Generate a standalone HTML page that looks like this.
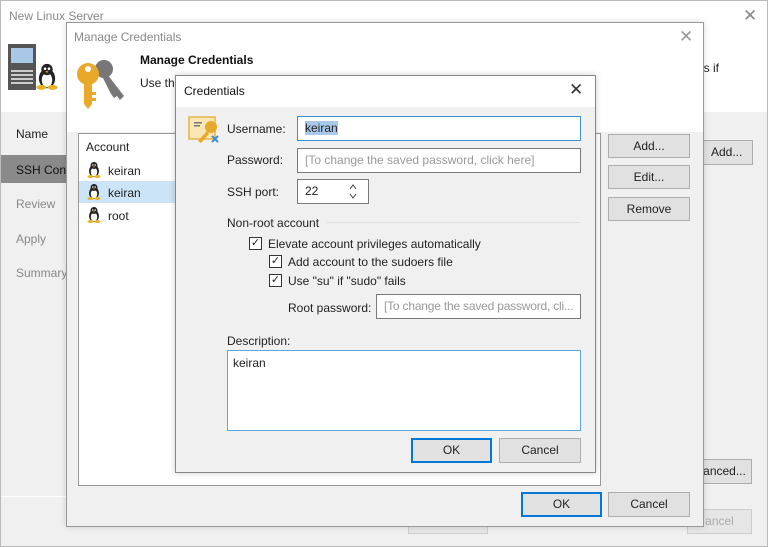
<!DOCTYPE html>
<html><head><style>
*{box-sizing:border-box;margin:0;padding:0}
body{width:768px;height:547px;overflow:hidden;font-family:"Liberation Sans",sans-serif;font-size:12px;color:#222;background:#f0f0f0;position:relative}
.a{position:absolute;white-space:nowrap}
.btn{position:absolute;background:#e1e1e1;border:1px solid #adadad;text-align:center;line-height:22px;font-size:12px;color:#222}
.btnp{border:2px solid #0078d7;line-height:20px}
.inp{position:absolute;background:#fff;border:1px solid #7a7a7a;padding-left:7px;line-height:22px;color:#999;white-space:nowrap;overflow:hidden}
.cb{position:absolute;width:13px;height:13px;border:1px solid #333;background:#fff;font-size:11px;line-height:11px;text-align:center;color:#222}
.x{position:absolute;font-size:17px;color:#333;line-height:17px}
</style></head><body>
<svg width="0" height="0" style="position:absolute"><defs>
<g id="pg"><ellipse cx="8" cy="10" rx="5" ry="6" fill="#222"/><ellipse cx="8" cy="11" rx="3.2" ry="4.5" fill="#fff"/><circle cx="8" cy="4.5" r="3.5" fill="#222"/><circle cx="6.8" cy="4" r=".8" fill="#fff"/><circle cx="9.2" cy="4" r=".8" fill="#fff"/><path d="M7 5.5h2l-1 1.2z" fill="#e8a92a"/><ellipse cx="4.5" cy="15.5" rx="3" ry="1.5" fill="#e8b320"/><ellipse cx="11.5" cy="15.5" rx="3" ry="1.5" fill="#e8b320"/></g>
</defs></svg>
<div class="a" style="left:0;top:0;width:768px;height:547px;border:1px solid #bbb;background:#f0f0f0"></div>
<div class="a" style="left:1px;top:1px;width:766px;height:111px;background:#fff"></div>
<div class="a" style="left:9px;top:9px;color:#888;font-size:12px">New Linux Server</div>
<div class="x" style="left:743px;top:7px;color:#888">✕</div>
<div class="a" style="left:697px;top:61px">gs if</div>
<div class="a" style="left:8px;top:44px;width:28px;height:46px;background:#555"></div>
<div class="a" style="left:11px;top:48px;width:22px;height:15px;background:#a9c8e8"></div>
<div class="a" style="left:11px;top:70px;width:22px;height:16px;background:repeating-linear-gradient(#ccc 0 2px,#555 2px 4px)"></div>
<svg class="a" style="left:34px;top:62px" width="26" height="28" viewBox="0 0 16 17"><use href="#pg"/></svg>
<div class="a" style="left:16px;top:127px">Name</div>
<div class="a" style="left:1px;top:155px;width:65px;height:28px;background:#8a8a8a"></div>
<div class="a" style="left:16px;top:163px;color:#111">SSH Conn</div>
<div class="a" style="left:16px;top:197px;color:#888">Review</div>
<div class="a" style="left:16px;top:232px;color:#888">Apply</div>
<div class="a" style="left:16px;top:266px;color:#888">Summary</div>
<div class="a" style="left:1px;top:496px;width:65px;height:1px;background:#fff"></div>
<div class="btn" style="left:697px;top:140px;width:56px;height:25px">&nbsp;Add...</div>
<div class="btn" style="left:697px;top:459px;width:55px;height:25px">anced...</div>
<div class="btn" style="left:687px;top:509px;width:65px;height:25px;color:#aaa;background:#e6e6e6;border-color:#ccc">ancel</div>
<div class="btn" style="left:408px;top:509px;width:80px;height:25px;background:#e6e6e6;border-color:#ccc"></div>
<div class="a" style="left:66px;top:22px;width:638px;height:505px;border:1px solid #999;background:#f0f0f0;box-shadow:0 0 6px rgba(0,0,0,.15)"></div>
<div class="a" style="left:67px;top:23px;width:636px;height:109px;background:#fff"></div>
<div class="a" style="left:74px;top:30px;color:#888">Manage Credentials</div>
<div class="x" style="left:679px;top:28px;color:#999">✕</div>
<svg class="a" style="left:74px;top:56px" width="56" height="56" viewBox="0 0 56 56">
<circle cx="30" cy="13" r="9" fill="#777"/><path d="M33 18 L50 40 L46 44 L43 40 L40 42 L37 38 L29 22Z" fill="#777"/>
<circle cx="14" cy="18" r="11" fill="#e8a92a"/><circle cx="14" cy="13" r="3" fill="#fff"/>
<path d="M10 27 H18 V48 L14 53 L10 48Z" fill="#e8a92a"/><rect x="18" y="36" width="4" height="3" fill="#e8a92a"/><rect x="18" y="42" width="4" height="3" fill="#e8a92a"/>
</svg>
<div class="a" style="left:140px;top:53px;font-weight:bold;color:#111">Manage Credentials</div>
<div class="a" style="left:140px;top:76px">Use th</div>
<div class="a" style="left:78px;top:133px;width:523px;height:353px;background:#fff;border:1px solid #999"></div>
<div class="a" style="left:86px;top:140px">Account</div>
<div class="a" style="left:79px;top:181px;width:97px;height:22px;background:#cce4f7"></div>
<svg class="a" style="left:86px;top:161px" width="16" height="17"><use href="#pg"/></svg><div class="a" style="left:108px;top:164px">keiran</div>
<svg class="a" style="left:86px;top:183px" width="16" height="17"><use href="#pg"/></svg><div class="a" style="left:108px;top:186px">keiran</div>
<svg class="a" style="left:86px;top:206px" width="16" height="17"><use href="#pg"/></svg><div class="a" style="left:108px;top:209px">root</div>
<div class="btn" style="left:608px;top:134px;width:82px;height:24px">Add...</div>
<div class="btn" style="left:608px;top:165px;width:82px;height:24px">Edit...</div>
<div class="btn" style="left:608px;top:197px;width:82px;height:24px">Remove</div>
<div class="btn btnp" style="left:521px;top:492px;width:81px;height:25px">OK</div>
<div class="btn" style="left:608px;top:492px;width:82px;height:25px">Cancel</div>
<div class="a" style="left:175px;top:75px;width:421px;height:398px;border:1px solid #888;background:#f0f0f0;box-shadow:0 0 6px rgba(0,0,0,.2)"></div>
<div class="a" style="left:176px;top:76px;width:419px;height:31px;background:#fff"></div>
<div class="a" style="left:184px;top:84px;color:#111">Credentials</div>
<div class="x" style="left:569px;top:81px">✕</div>
<svg class="a" style="left:188px;top:115px" width="34" height="30" viewBox="0 0 34 30">
<rect x="1" y="2" width="26" height="22" fill="#fbe7b5" stroke="#e8b24a" stroke-width="1.5"/>
<rect x="6" y="7" width="8" height="1.5" fill="#777"/><rect x="6" y="10" width="6" height="1.5" fill="#777"/>
<circle cx="23" cy="12" r="6" fill="#e8a92a"/><path d="M19 16 L10 26 L13 28 L21 19Z" fill="#e8a92a"/>
<path d="M24 21 L30 27 M30 21 L24 27" stroke="#3a8fd0" stroke-width="2"/>
</svg>
<div class="a" style="left:227px;top:122px">Username:</div>
<div class="inp" style="left:297px;top:116px;width:284px;height:25px;border-color:#3c8fd6;color:#222"><span style="background:#a9c9ea">keiran</span></div>
<div class="a" style="left:227px;top:153px">Password:</div>
<div class="inp" style="left:297px;top:148px;width:284px;height:25px">[To change the saved password, click here]</div>
<div class="a" style="left:227px;top:185px">SSH port:</div>
<div class="inp" style="left:297px;top:179px;width:72px;height:25px;color:#222;overflow:visible">22
<svg class="a" style="left:50px;top:3px" width="10" height="17" viewBox="0 0 10 17"><path d="M2 6 L5 2 L8 6 M2 11 L5 15 L8 11" fill="none" stroke="#444" stroke-width="1"/></svg></div>
<div class="a" style="left:227px;top:216px">Non-root account</div>
<div class="a" style="left:327px;top:222px;width:253px;height:1px;background:#ddd"></div>
<div class="cb" style="left:249px;top:237px">✓</div><div class="a" style="left:268px;top:237px">Elevate account privileges automatically</div>
<div class="cb" style="left:269px;top:255px">✓</div><div class="a" style="left:288px;top:255px">Add account to the sudoers file</div>
<div class="cb" style="left:269px;top:274px">✓</div><div class="a" style="left:288px;top:274px">Use "su" if "sudo" fails</div>
<div class="a" style="left:288px;top:301px">Root password:</div>
<div class="inp" style="left:376px;top:294px;width:205px;height:25px;letter-spacing:-0.2px">[To change the saved password, cli...</div>
<div class="a" style="left:227px;top:334px">Description:</div>
<div class="a" style="left:227px;top:350px;width:354px;height:81px;background:#fff;border:1px solid #5aa7e0;padding:5px 5px">keiran</div>
<div class="btn btnp" style="left:411px;top:438px;width:81px;height:25px">OK</div>
<div class="btn" style="left:499px;top:438px;width:82px;height:25px">Cancel</div>
</body></html>
